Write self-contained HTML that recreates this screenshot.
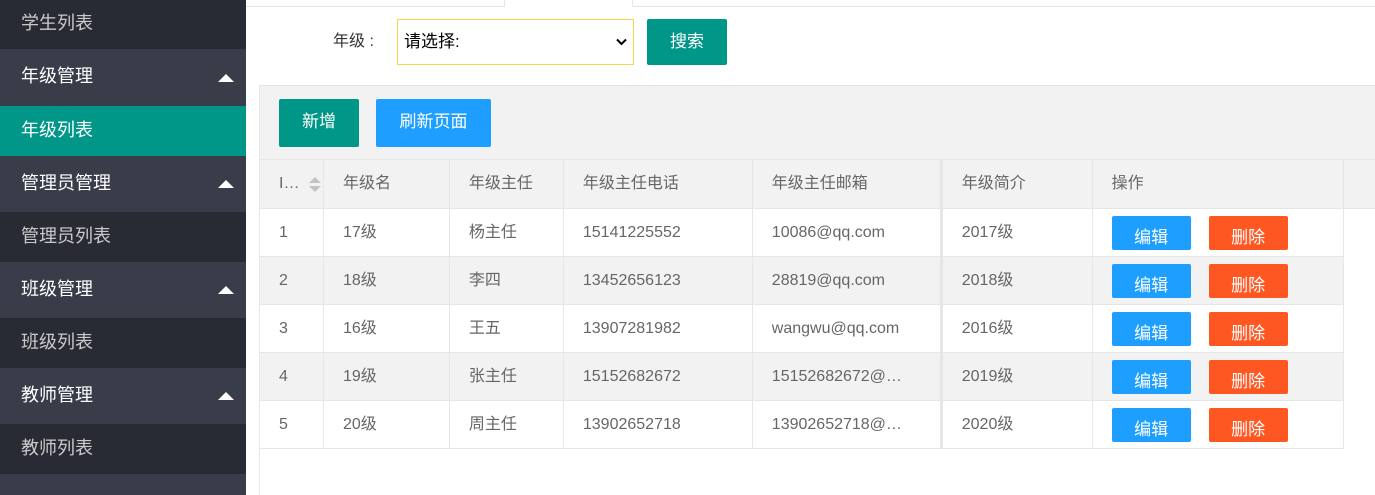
<!DOCTYPE html><html><head><meta charset="utf-8"><style>
*{margin:0;padding:0;box-sizing:border-box}
body{width:1375px;height:495px;overflow:hidden;background:#fff;font-family:"Liberation Sans","Noto Sans CJK SC",sans-serif;position:relative}
.sb{position:absolute;left:0;top:0;width:246px;height:495px;background:#393d49}
.sb div{position:absolute;left:0;width:246px;color:#fff;font-size:18px;padding-left:21px}
.it{background:#282b33;color:rgba(255,255,255,.75)!important}
.hd::after{content:"";position:absolute;right:12px;top:50%;margin-top:-4px;border:8px solid transparent;border-bottom:8px solid #fff;border-top:0;border-left-width:8px;border-right-width:8px}
.ab{position:absolute}
.btn{position:absolute;color:#fff;font-size:17px;text-align:center;border-radius:2px}
table{position:absolute;left:259px;top:159px;border-collapse:collapse;font-size:16px;color:#666}
td{border:1px solid #e6e6e6;height:48px;padding:0 0 0 19px;position:relative;white-space:nowrap;overflow:hidden;line-height:20px;vertical-align:middle}
tr.h td{background:#f2f2f2;height:49px}
tr.g td{background:#f2f2f2}
.e,.d{position:absolute;top:7px;width:79px;height:34px;color:#fff;font-size:17px;text-align:center;line-height:44px;overflow:hidden;border-radius:2px}
.e{left:19px;background:#1e9fff}.d{left:116px;background:#ff5722}
</style></head><body>
<div class="sb">
<div class="it" style="top:0;height:49px;line-height:46px">学生列表</div>
<div class="hd" style="top:49px;height:57px;line-height:55px">年级管理</div>
<div style="top:106px;height:50px;line-height:48px;background:#009688">年级列表</div>
<div class="hd" style="top:156px;height:56px;line-height:54px">管理员管理</div>
<div class="it" style="top:212px;height:50px;line-height:48px">管理员列表</div>
<div class="hd" style="top:262px;height:56px;line-height:54px">班级管理</div>
<div class="it" style="top:318px;height:50px;line-height:48px">班级列表</div>
<div class="hd" style="top:368px;height:56px;line-height:54px">教师管理</div>
<div class="it" style="top:424px;height:50px;line-height:48px">教师列表</div>
</div>
<div class="ab" style="left:246px;top:0;width:259px;height:7px;border-bottom:1px solid #e6e6e6;border-right:1px solid #e6e6e6"></div>
<div class="ab" style="left:632px;top:0;width:743px;height:7px;border-bottom:1px solid #e6e6e6;border-left:1px solid #e6e6e6"></div>
<div class="ab" style="left:333px;top:32px;font-size:16px;color:#333;line-height:20px">年级 :</div>
<div class="ab" style="left:397px;top:19px;width:237px;height:46px;border:1px solid #f5d94a;font-size:17px;color:#000;padding-left:6px;line-height:44px">请选择:<svg style="position:absolute;right:6px;top:18px" width="11" height="8" viewBox="0 0 11 8"><path d="M1 1.5l4.5 4.5 4.5-4.5" fill="none" stroke="#000" stroke-width="2"/></svg></div>
<div class="btn" style="left:647px;top:19px;width:80px;height:46px;line-height:46px;background:#009688">搜索</div>
<div class="ab" style="left:259px;top:85px;width:1116px;height:410px;border-left:1px solid #e6e6e6;border-top:1px solid #e6e6e6"></div>
<div class="ab" style="left:260px;top:86px;width:1115px;height:73px;background:#f2f2f2"></div>
<div class="btn" style="left:279px;top:99px;width:80px;height:48px;line-height:46px;background:#009688">新增</div>
<div class="btn" style="left:376px;top:99px;width:115px;height:48px;line-height:46px;background:#1e9fff">刷新页面</div>
<table>
<colgroup><col style="width:64px"><col style="width:126px"><col style="width:114px"><col style="width:189px"><col style="width:189px"><col style="width:151px"><col style="width:252px"><col style="width:31px"></colgroup>
<tr class="h"><td>I…<svg style="position:absolute;left:49px;top:16px" width="12" height="18" viewBox="0 0 12 18"><path d="M0 7L6 1L12 7Z M0 10L6 16L12 10Z" fill="#c2c2c2"/></svg></td><td>年级名</td><td>年级主任</td><td>年级主任电话</td><td style="border-right:3px solid #e6e6e6">年级主任邮箱</td><td>年级简介</td><td>操作</td><td style="border-right:0"></td></tr>
<tr><td>1</td><td>17级</td><td>杨主任</td><td>15141225552</td><td style="border-right:3px solid #e6e6e6">10086@qq.com</td><td>2017级</td><td><span class="e">编辑</span><span class="d">删除</span></td><td style="border:0;background:#fff"></td></tr>
<tr class="g"><td>2</td><td>18级</td><td>李四</td><td>13452656123</td><td style="border-right:3px solid #e6e6e6">28819@qq.com</td><td>2018级</td><td><span class="e">编辑</span><span class="d">删除</span></td><td style="border:0;background:#fff"></td></tr>
<tr><td>3</td><td>16级</td><td>王五</td><td>13907281982</td><td style="border-right:3px solid #e6e6e6">wangwu@qq.com</td><td>2016级</td><td><span class="e">编辑</span><span class="d">删除</span></td><td style="border:0;background:#fff"></td></tr>
<tr class="g"><td>4</td><td>19级</td><td>张主任</td><td>15152682672</td><td style="border-right:3px solid #e6e6e6">15152682672@…</td><td>2019级</td><td><span class="e">编辑</span><span class="d">删除</span></td><td style="border:0;background:#fff"></td></tr>
<tr><td>5</td><td>20级</td><td>周主任</td><td>13902652718</td><td style="border-right:3px solid #e6e6e6">13902652718@…</td><td>2020级</td><td><span class="e">编辑</span><span class="d">删除</span></td><td style="border:0;background:#fff"></td></tr>
</table>
</body></html>
